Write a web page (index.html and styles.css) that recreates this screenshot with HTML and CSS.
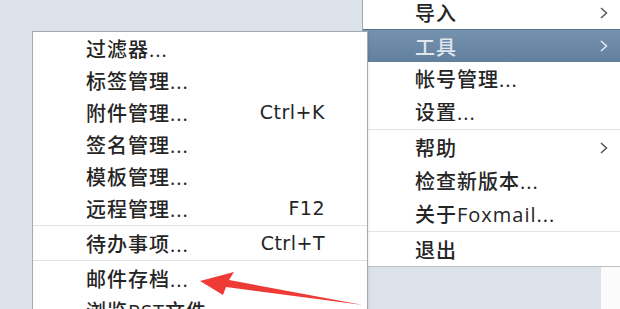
FILE: index.html
```html
<!DOCTYPE html>
<html lang="zh-CN">
<head>
<meta charset="utf-8">
<title>Foxmail 菜单</title>
<link rel="stylesheet" href="styles.css">
</head>
<body>
<div class="screen">
  <div class="app-bg"></div>
  <div class="app-side"></div>

  <div class="menu main-menu">
    <div class="item"><span class="label">导入</span><svg class="chev" viewBox="0 0 8 12"><path d="M1 1 L6.5 6 L1 11"/></svg></div>
    <div class="item active"><span class="label">工具</span><svg class="chev" viewBox="0 0 8 12"><path d="M1 1 L6.5 6 L1 11"/></svg></div>
    <div class="item"><span class="label">帐号管理...</span></div>
    <div class="item"><span class="label">设置...</span></div>
    <div class="sep"></div>
    <div class="item"><span class="label">帮助</span><svg class="chev" viewBox="0 0 8 12"><path d="M1 1 L6.5 6 L1 11"/></svg></div>
    <div class="item"><span class="label">检查新版本...</span></div>
    <div class="item"><span class="label">关于Foxmail...</span></div>
    <div class="sep"></div>
    <div class="item"><span class="label">退出</span></div>
  </div>

  <div class="menu sub-menu">
    <div class="item"><span class="label">过滤器...</span></div>
    <div class="item"><span class="label">标签管理...</span></div>
    <div class="item"><span class="label">附件管理...</span><span class="key">Ctrl+K</span></div>
    <div class="item"><span class="label">签名管理...</span></div>
    <div class="item"><span class="label">模板管理...</span></div>
    <div class="item"><span class="label">远程管理...</span><span class="key">F12</span></div>
    <div class="sep"></div>
    <div class="item"><span class="label">待办事项...</span><span class="key">Ctrl+T</span></div>
    <div class="sep"></div>
    <div class="item"><span class="label">邮件存档...</span></div>
    <div class="item"><span class="label">浏览PST文件</span></div>
  </div>

  <svg class="arrow" viewBox="0 0 620 309">
    <polygon points="200,281 234,272 229,280 363,305 226,287 223,295"/>
  </svg>
</div>
</body>
</html>
```

FILE: styles.css
```css
* { box-sizing: border-box; }

html, body {
  margin: 0;
  padding: 0;
  width: 620px;
  height: 309px;
  overflow: hidden;
}

body {
  font-family: "Open Sans", "Noto Sans CJK SC", sans-serif;
  color: #252525;
}

.screen {
  position: relative;
  width: 620px;
  height: 309px;
  display: flex;
  overflow: hidden;
}

.app-bg {
  flex: 1;
  background: #dbe2e9;
}

.app-side {
  width: 19px;
  background: #fbfbfb;
}

.menu {
  position: absolute;
  background: #ffffff;
  display: flex;
  flex-direction: column;
  font-size: 20px;
  font-weight: 500;
  letter-spacing: 1px;
}

.main-menu {
  left: 362px;
  top: -4px;
  width: 258px;
  border-left: 1px solid #9ea6af;
  border-bottom: 1px solid #b9c0c7;
}

.main-menu .item {
  height: 33px;
  display: flex;
  align-items: center;
  justify-content: space-between;
  padding-left: 52px;
  padding-right: 12px;
}

.main-menu .item.active {
  background: linear-gradient(#7592af, #627f9e);
  border-top: 1px solid #56728f;
  color: #dfe6ee;
}

.chev {
  width: 8px;
  height: 12px;
  fill: none;
  stroke: #555;
  stroke-width: 1.5;
}

.item.active .chev {
  stroke: #e6ecf2;
}

.sep {
  height: 3px;
  display: flex;
  align-items: center;
}

.sep::before {
  content: "";
  flex: 1;
  height: 1px;
  background: #e2e2e2;
}

.sub-menu {
  left: 32px;
  top: 31px;
  width: 336px;
  border: 1px solid #a3aab2;
  border-bottom: none;
  box-shadow: 1px 1px 2px rgba(0,0,0,0.08);
}

.sub-menu .item {
  height: 32px;
  display: flex;
  align-items: center;
  justify-content: space-between;
  padding-left: 53px;
  padding-right: 42px;
}

.key {
  font-family: "DejaVu Sans", sans-serif;
  font-size: 19px;
  letter-spacing: 0.5px;
}

.arrow {
  position: absolute;
  left: 0;
  top: 0;
  width: 620px;
  height: 309px;
  fill: #ee3b36;
}
```
